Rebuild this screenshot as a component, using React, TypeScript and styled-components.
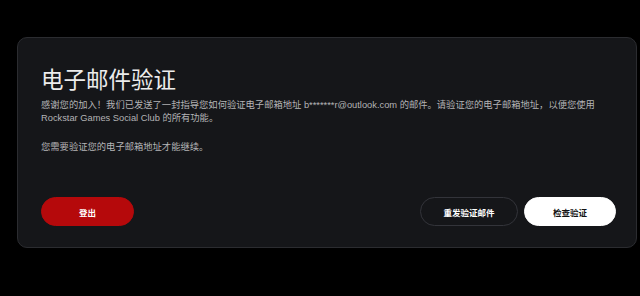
import styled, { createGlobalStyle } from "styled-components";

/* ---------------------------------------------
   Global
--------------------------------------------- */
const Global = createGlobalStyle`
  html, body {
    margin: 0;
    padding: 0;
    background: #000000;
  }
  body {
    font-family: "Liberation Sans", "Noto Sans CJK SC", sans-serif;
  }
`;

/* ---------------------------------------------
   Styled Components
--------------------------------------------- */
const Page = styled.div`
  width: 640px;
  height: 296px;
  background: #000000;
  padding: 37px 0 0 17px;
  box-sizing: border-box;
`;

const Card = styled.div`
  width: 620px;
  height: 211px;
  box-sizing: border-box;
  background: #151619;
  border: 1px solid #2b2c30;
  border-radius: 10px;
  padding: 25px 20px 21px 23px;
  display: flex;
  flex-direction: column;
`;

const Title = styled.h1`
  margin: 0 0 6px;
  font-family: "Noto Sans CJK SC", sans-serif;
  font-size: 22.5px;
  line-height: 30px;
  font-weight: 400;
  color: #ececec;
`;

const Text = styled.p`
  margin: 0 0 16px;
  font-size: 9.3px;
  line-height: 13px;
  color: #b4b4b6;
  padding-right: 20px;
`;

const Actions = styled.div`
  margin-top: auto;
  display: flex;
  align-items: center;
  gap: 6px;
`;

const Spacer = styled.div`
  flex: 1;
`;

const Button = styled.button<{ $variant: "danger" | "outline" | "light"; $width: number }>`
  height: 29px;
  width: ${(p) => p.$width}px;
  padding: 0;
  border-radius: 15px;
  font-family: "Noto Sans CJK SC", sans-serif;
  font-size: 8.5px;
  font-weight: 700;
  cursor: pointer;
  border: 1px solid
    ${(p) =>
      p.$variant === "outline" ? "#33343a" : p.$variant === "danger" ? "#b5090b" : "#ffffff"};
  background: ${(p) =>
    p.$variant === "danger" ? "#b5090b" : p.$variant === "light" ? "#ffffff" : "transparent"};
  color: ${(p) => (p.$variant === "light" ? "#111111" : "#ffffff")};
`;

/* ---------------------------------------------
   Component
--------------------------------------------- */
export default function App() {
  return (
    <>
      <Global />
      <Page>
        <Card>
          <Title>电子邮件验证</Title>
          <Text>
            感谢您的加入！我们已发送了一封指导您如何验证电子邮箱地址 b*******r@outlook.com
            的邮件。请验证您的电子邮箱地址，以便您使用 Rockstar Games Social Club 的所有功能。
          </Text>
          <Text>您需要验证您的电子邮箱地址才能继续。</Text>
          <Actions>
            <Button $variant="danger" $width={93}>
              登出
            </Button>
            <Spacer />
            <Button $variant="outline" $width={98}>
              重发验证邮件
            </Button>
            <Button $variant="light" $width={92}>
              检查验证
            </Button>
          </Actions>
        </Card>
      </Page>
    </>
  );
}
